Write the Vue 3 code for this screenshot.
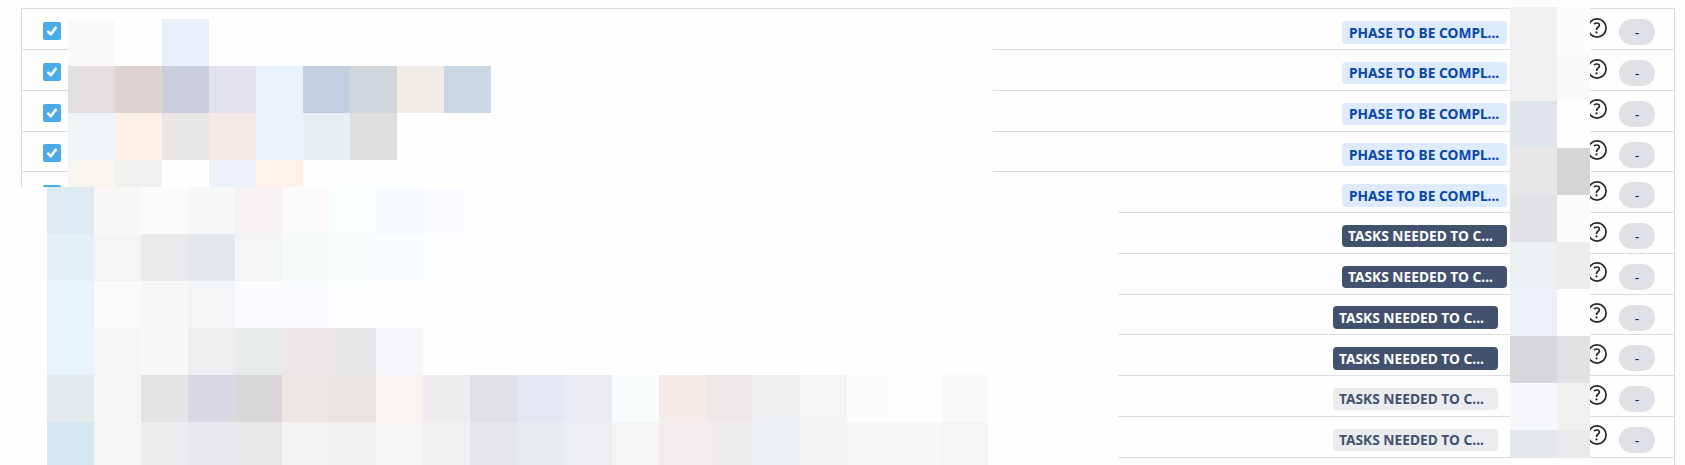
<script setup>
const phase = 'PHASE TO BE COMPL...'
const tasks = 'TASKS NEEDED TO C...'
// h: row height, box / tag / help: offset of the cell content from the row's top line
const rows = [
  { label: phase, kind: 'phase tall', h: 41, box: 14, tag: 13, help: 10 },
  { label: phase, kind: 'phase', h: 41, box: 14, tag: 13, help: 10 },
  { label: phase, kind: 'phase', h: 41, box: 14, tag: 13, help: 9 },
  { label: phase, kind: 'phase tall', h: 40, box: 13, tag: 12, help: 9 },
  { label: phase, kind: 'phase tall', h: 41, box: 14, tag: 13, help: 10 },
  { label: tasks, kind: 'dark', h: 41, box: 14, tag: 13, help: 10 },
  { label: tasks, kind: 'dark', h: 41, box: 14, tag: 13, help: 9 },
  { label: tasks, kind: 'dark tall shifted', h: 40, box: 13, tag: 12, help: 9 },
  { label: tasks, kind: 'dark tall shifted', h: 41, box: 14, tag: 13, help: 10 },
  { label: tasks, kind: 'muted shifted', h: 41, box: 14, tag: 13, help: 10 },
  { label: tasks, kind: 'muted shifted', h: 41, box: 14, tag: 13, help: 9 },
]

const upper = [
  ['#faf9f7', '#fefefe', '#e8f0f9'],
  ['#e4dfe1', '#ddd4d2', '#cacddd', '#e1e2eb', '#eaf2f9', '#c5cde1', '#cfd6dc', '#f2ece7', '#cad6e4', '#fbfdff'],
  ['#eef4f8', '#fbf1e7', '#e8e7e5', '#f4eae5', '#eaf1f9', '#e8eff2', '#dededc'],
  ['#f8f5ee', '#f0f0ee', '#fdfefe', '#ecf1fa', '#fdf1e8'],
]
const lower = [
  ['#deebf3', '#f9f7f6', '#fbfbf9', '#f7f9f9', '#f6f2f1', '#fdfbfa', '#fbfeff', '#f6faff', '#fbfcff'],
  ['#e4f0f6', '#f6f4f2', '#ebebed', '#e3e8ec', '#f3f4f6', '#f6fafb', '#f8fdfd', '#f8feff', '#fdfeff'],
  ['#e8f4fa', '#fcfafb', '#f7f7f7', '#f2f4f6', '#fbfcff', '#fbfcff', '#fdfefe'],
  ['#e8f4fa', '#f7f5f8', '#f9f7f8', '#eeeef0', '#e7ebeb', '#ebe7ea', '#e7e7e9', '#f6f7fa'],
  ['#e4ebed', '#f6f5f3', '#e6e3e7', '#d8d9e2', '#dad7da', '#ebe7e5', '#e9e5e3', '#f7f3f1', '#eeecef', '#e0e1e7', '#e3e8f3', '#ebecf2', '#f9fcfd', '#f4eae6', '#eee8e8', '#edeef0', '#f5f3f3', '#fdfbfc', '#fefefe', '#faf8fa'],
  ['#d6e7f1', '#f5f5f5', '#ededef', '#e8e9ed', '#eae7ea', '#f4f3f4', '#f2f0f0', '#f6f5f3', '#f0f0f2', '#e6e7ed', '#e8ecf1', '#edeef2', '#f4f6f6', '#f2eeed', '#eeecee', '#edf0f2', '#f2f2f4', '#f6f6f9', '#f7f8fa', '#f5f3f6'],
]
const side = [
  ['#f0f0f2', '#fcfcfc'],
  ['#f0f0f2', '#fafafa'],
  ['#e0e4eb', '#fefefe'],
  ['#e7e7e9', '#d6d6d8'],
  ['#e1e2e6', '#fdfbf9'],
  ['#ebf0f2', '#ededed'],
  ['#ecf1f7', '#fefefe'],
  ['#d6d7dc', '#e1e1e3'],
  ['#f6f8fd', '#f0f0ee'],
  ['#e4e7ec', '#eaeaec'],
]
</script>

<template>
  <main class="screen">
    <section class="table">
      <div v-for="(r, i) in rows" :key="i" class="row" :style="{ height: r.h + 'px' }">
        <span class="check" :style="{ marginTop: r.box - 1 + 'px' }">
          <svg viewBox="0 0 18 18" width="18" height="18">
            <path d="M5.2 9.6 L7.9 12.2 L12.7 5.8" fill="none" stroke="#fff" stroke-width="2.7" stroke-linecap="round" stroke-linejoin="round" />
          </svg>
        </span>
        <span class="tag" :class="r.kind" :style="{ marginTop: r.tag - 1 + 'px' }"><span class="label">{{ r.label }}</span></span>
        <svg class="help" :style="{ marginTop: r.help - 1 + 'px' }" viewBox="0 0 20 20" width="20" height="20">
          <circle cx="10" cy="10" r="9.1" fill="none" stroke="#262626" stroke-width="1.7" />
          <path d="M7 6 Q8.3 5 9.8 5 Q12.4 5 12.4 7.1 Q12.4 8.2 10.9 9.3 Q9.5 10.3 9.5 12" fill="none" stroke="#262626" stroke-width="1.7" />
          <circle cx="9.5" cy="14.4" r="1.1" fill="#262626" />
        </svg>
        <span class="pill">-</span>
      </div>
      <div class="row rest"></div>
    </section>

    <div class="mosaic upper">
      <div v-for="(line, i) in upper" :key="i" class="line">
        <i v-for="(c, j) in line" :key="j" class="tile" :style="{ background: c }"></i>
      </div>
    </div>
    <div class="mosaic lower">
      <div v-for="(line, i) in lower" :key="i" class="line">
        <i v-for="(c, j) in line" :key="j" class="tile" :style="{ background: c }"></i>
      </div>
    </div>
    <div class="mosaic side">
      <div v-for="(line, i) in side" :key="i" class="line">
        <i v-for="(c, j) in line" :key="j" class="tile" :style="{ background: c }"></i>
      </div>
    </div>
  </main>
</template>

<style>
body {
  background: #fff;
}
</style>

<style scoped>
.screen {
  box-sizing: border-box;
  position: relative;
  width: 1685px;
  height: 465px;
  padding: 8px 0 0 21px;
  overflow: hidden;
  background: #fefefe;
  font-family: "Noto Sans", "Open Sans", sans-serif;
}
.table {
  box-sizing: border-box;
  width: 1654px;
  height: 457px;
  border: solid #dcdce0;
  border-width: 0 1px;
}
.row {
  box-sizing: border-box;
  display: flex;
  align-items: flex-start;
  border-top: 1px solid #dcdce0;
}
.rest {
  height: 8px;
}
.check {
  width: 18px;
  height: 18px;
  margin-left: 21px;
  border-radius: 2px;
  background: #49abe8;
}
.check svg {
  display: block;
}
.tag {
  box-sizing: border-box;
  width: 165px;
  height: 22px;
  margin-left: 1281px;
  padding-left: 7px;
  border-radius: 4px;
  font-size: 15px;
  font-weight: 700;
  line-height: 21px;
  white-space: nowrap;
}
.tall {
  height: 23px;
  line-height: 23px;
}
.label {
  display: inline-block;
  transform: scaleX(0.917);
  transform-origin: 0 50%;
}
.phase {
  background: #deebff;
  color: #0747a6;
}
.dark {
  background: #42526e;
  color: #fff;
}
.muted {
  background: #ebecf0;
  color: #42526e;
}
.dark,
.muted {
  padding-left: 6px;
}
.shifted {
  margin-left: 1272px;
  margin-right: 9px;
}
.help {
  margin-left: 80px;
}
.pill {
  width: 36px;
  height: 26px;
  margin: 10px 0 0 12px;
  border-radius: 13px;
  background: #dfe1e6;
  color: #172b6d;
  font-size: 14px;
  line-height: 28px;
  text-align: center;
}
.mosaic {
  position: absolute;
  background: #fefefe;
  overflow: hidden;
}
.line {
  display: flex;
  height: 47px;
}
.tile {
  flex: none;
  width: 47.05px;
}
.upper {
  left: 68px;
  top: 14px;
  width: 925px;
  height: 173px;
  padding-top: 5px;
  box-sizing: border-box;
}
.lower {
  box-sizing: border-box;
  left: 0;
  top: 187px;
  width: 1118px;
  height: 278px;
  padding-left: 47px;
}
.side {
  left: 1510px;
  top: 7px;
  width: 80px;
  height: 451px;
}
</style>
